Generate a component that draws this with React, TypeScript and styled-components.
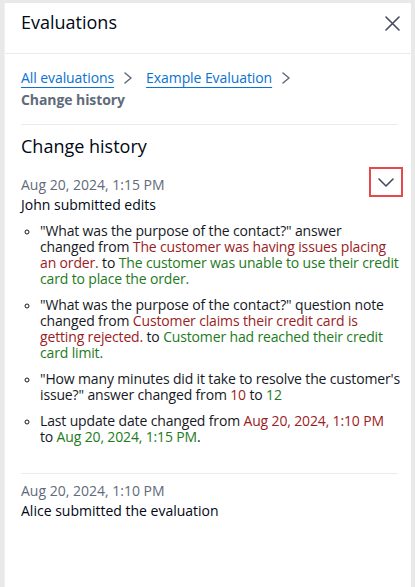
import React from "react";
import styled, { createGlobalStyle } from "styled-components";

const Global = createGlobalStyle`
  html, body { margin: 0; padding: 0; }
  body {
    background: #e9e9e9;
    font-family: "Open Sans", "Noto Sans", Arial, sans-serif;
    color: #000716;
  }
`;

const Panel = styled.div`
  margin: 3px 4px 0 4px;
  background: #ffffff;
  min-height: 584px;
  box-sizing: border-box;
  border-left: 1px solid #f0f0f0;
`;

const Header = styled.header`
  height: 51px;
  box-sizing: border-box;
  display: flex;
  align-items: flex-start;
  justify-content: space-between;
  padding: 7px 11px 0 16px;
  border-bottom: 1px solid #e9ebed;
`;

const Title = styled.h1`
  margin: 0;
  font-size: 18px;
  line-height: 24px;
  font-weight: 400;
  color: #000716;
`;

const CloseButton = styled.button`
  border: 0;
  background: none;
  padding: 0;
  margin-top: 5px;
  width: 16px;
  height: 16px;
  display: flex;
  align-items: center;
  justify-content: center;
  color: #414d5c;
`;

const Content = styled.main`
  padding: 16px 13px 0 16px;
`;

const Breadcrumbs = styled.nav`
  display: flex;
  flex-wrap: wrap;
  align-items: center;
  row-gap: 6px;
  font-size: 14px;
  line-height: 16px;
  letter-spacing: -0.08px;
`;

const Crumb = styled.a`
  color: #0972d3;
  text-decoration: underline;
  text-underline-offset: 4px;
  text-decoration-thickness: 1px;
`;

const Sep = styled.span`
  display: inline-flex;
  margin: 0 14px 0 10px;
  color: #5f6b7a;
`;

const Current = styled.span`
  flex-basis: 100%;
  font-weight: 700;
  color: #5f6b7a;
`;

const Divider = styled.hr<{ $top: number; $bottom: number }>`
  border: 0;
  border-top: 1px solid #e9ebed;
  margin: ${(p) => `${p.$top}px 0 ${p.$bottom}px`};
`;

const Heading = styled.h2`
  margin: 0;
  font-size: 18px;
  line-height: 24px;
  font-weight: 400;
  color: #000716;
`;

const EventHead = styled.div`
  display: flex;
  align-items: flex-start;
  justify-content: space-between;
  margin-top: 12px;
`;

const DateText = styled.div<{ $offset?: number }>`
  font-size: 14px;
  line-height: 20px;
  color: #5f6b7a;
  margin-top: ${(p) => p.$offset ?? 0}px;
`;

const ExpandButton = styled.button`
  position: relative;
  border: 0;
  background: none;
  padding: 0;
  width: 24px;
  height: 24px;
  display: flex;
  align-items: center;
  justify-content: center;
  color: #414d5c;
  &::after {
    content: "";
    position: absolute;
    top: -3px;
    bottom: -3px;
    left: -5px;
    right: -5px;
    border: 2px solid #e5484d;
  }
`;

const Actor = styled.div`
  font-size: 14px;
  line-height: 20px;
  color: #000716;
`;

const Changes = styled.ul`
  margin: 8px 0 0;
  padding: 0 0 0 19px;
  list-style: circle;
  font-size: 14px;
  line-height: 16px;
  letter-spacing: -0.15px;
  color: #16191f;
  & > li + li { margin-top: 10px; }
  & > li::marker { font-size: 12px; }
`;

const Line = styled.span`
  display: block;
  white-space: nowrap;
`;

const Old = styled.span`
  color: #9b1c24;
`;

const New = styled.span`
  color: #1d7a1d;
`;

const RightChevron = () => (
  <svg width="8" height="12" viewBox="0 0 8 12" fill="none" stroke="currentColor" strokeWidth="1.5" strokeLinecap="round" strokeLinejoin="round">
    <path d="M1 1 L7 6 L1 11" />
  </svg>
);

const DownChevron = () => (
  <svg width="16" height="9" viewBox="0 0 16 9" fill="none" stroke="currentColor" strokeWidth="1.6" strokeLinecap="round" strokeLinejoin="round">
    <path d="M1 1 L8 8 L15 1" />
  </svg>
);

export default function App() {
  return (
    <>
      <Global />
      <Panel>
        <Header>
          <Title>Evaluations</Title>
          <CloseButton aria-label="Close">
            <svg width="15" height="15" viewBox="0 0 15 15" stroke="currentColor" strokeWidth="1.6" strokeLinecap="round">
              <path d="M1 1 L14 14 M14 1 L1 14" />
            </svg>
          </CloseButton>
        </Header>
        <Content>
          <Breadcrumbs>
            <Crumb>All evaluations</Crumb>
            <Sep><RightChevron /></Sep>
            <Crumb>Example Evaluation</Crumb>
            <Sep><RightChevron /></Sep>
            <Current>Change history</Current>
          </Breadcrumbs>
          <Divider $top={16} $bottom={9} />
          <Heading>Change history</Heading>
          <EventHead>
            <DateText $offset={5}>Aug 20, 2024, 1:15 PM</DateText>
            <ExpandButton aria-label="Expand">
              <DownChevron />
            </ExpandButton>
          </EventHead>
          <Actor>John submitted edits</Actor>
          <Changes>
            <li>
              <Line>"What was the purpose of the contact?" answer</Line>
              <Line>changed from <Old>The customer was having issues placing</Old></Line>
              <Line><Old>an order.</Old> to <New>The customer was unable to use their credit</New></Line>
              <Line><New>card to place the order.</New></Line>
            </li>
            <li>
              <Line>"What was the purpose of the contact?" question note</Line>
              <Line>changed from <Old>Customer claims their credit card is</Old></Line>
              <Line><Old>getting rejected.</Old> to <New>Customer had reached their credit</New></Line>
              <Line><New>card limit.</New></Line>
            </li>
            <li>
              <Line>"How many minutes did it take to resolve the customer's</Line>
              <Line>issue?" answer changed from <Old>10</Old> to <New>12</New></Line>
            </li>
            <li>
              <Line>Last update date changed from <Old>Aug 20, 2024, 1:10 PM</Old></Line>
              <Line>to <New>Aug 20, 2024, 1:15 PM</New>.</Line>
            </li>
          </Changes>
          <Divider $top={28} $bottom={7} />
          <DateText>Aug 20, 2024, 1:10 PM</DateText>
          <Actor>Alice submitted the evaluation</Actor>
        </Content>
      </Panel>
    </>
  );
}
